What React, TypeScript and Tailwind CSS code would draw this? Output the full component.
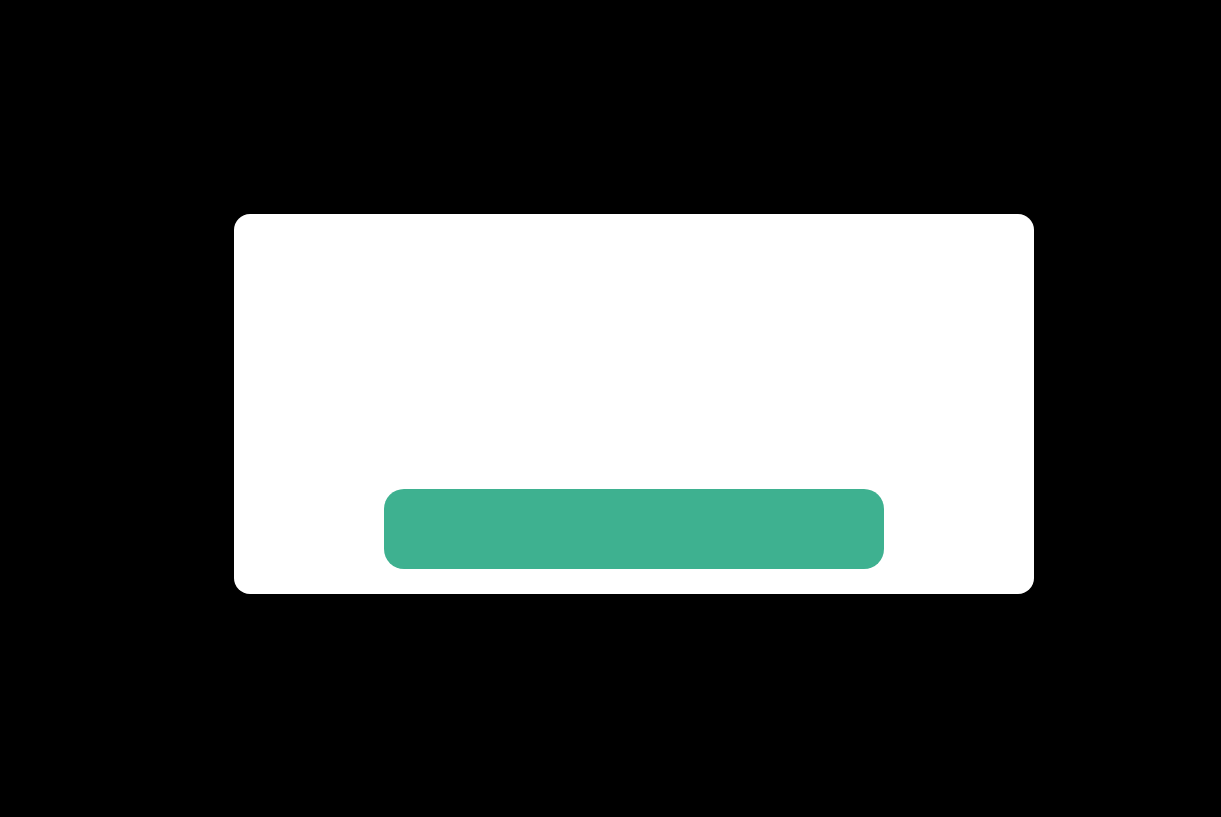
export default function App() {
  return (
    <div className="min-h-screen w-full bg-black pt-[214px] pl-[234px]">
      <div className="flex h-[380px] w-[800px] flex-col items-center justify-end rounded-2xl bg-white pb-[25px]">
        <button
          type="button"
          className="h-[80px] w-[500px] rounded-[20px] bg-[#3eb190]"
        />
      </div>
    </div>
  );
}
